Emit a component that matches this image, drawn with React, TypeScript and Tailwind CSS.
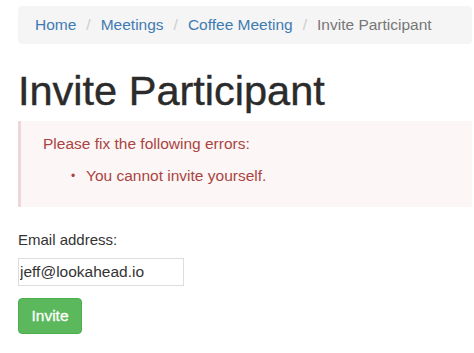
import React from 'react';

const crumbs = ['Home', 'Meetings', 'Coffee Meeting'];

export default function App() {
  return (
    <div className="w-[474px] h-[353px] overflow-hidden bg-white pl-[18px] pr-[2px] pt-[6px] text-[#333] font-['Liberation_Sans',Arial,sans-serif]">
      {/* Breadcrumb */}
      <nav className="h-[38px] rounded bg-[#f5f5f5] pl-[17px] flex items-center text-[15.5px]">
        {crumbs.map((c) => (
          <span key={c} className="flex items-center">
            <a href="#" className="text-[#3f7bb3]">{c}</a>
            <span className="px-[10px] text-[#ccc]">/</span>
          </span>
        ))}
        <span className="text-[#777]">Invite Participant</span>
      </nav>

      <h1 className="mt-[23px] text-[41.5px] leading-[48px] text-[#2b2b2b] [-webkit-text-stroke:0.4px_#2b2b2b]">Invite Participant</h1>

      {/* Error alert */}
      <div className="mt-[6px] h-[86px] bg-[#fdf6f6] border-l-[3px] border-[#efd6dc] pl-[22px] pt-[12px] text-[15.5px] text-[#a94442]">
        <p className="leading-[22px]">Please fix the following errors:</p>
        <ul className="mt-[10px] pl-[28px] leading-[22px]">
          <li className="flex items-center">
            <span className="w-[15px] text-[12px]">•</span>
            You cannot invite yourself.
          </li>
        </ul>
      </div>

      {/* Form */}
      <form className="mt-[23px]">
        <label className="block text-[15px] leading-[20px] text-[#333]">Email address:</label>
        <input
          type="text"
          defaultValue="jeff@lookahead.io"
          className="mt-[8px] block w-[166px] h-[28px] border border-[#ddd] px-[1px] text-[15.5px] text-[#333] outline-none"
        />
        <button
          type="button"
          className="mt-[12px] block w-[64px] h-[36px] rounded bg-[#5cb85c] border border-[#4cae4c] text-white text-[15.5px] [-webkit-text-stroke:0.3px_white]"
        >
          Invite
        </button>
      </form>
    </div>
  );
}
